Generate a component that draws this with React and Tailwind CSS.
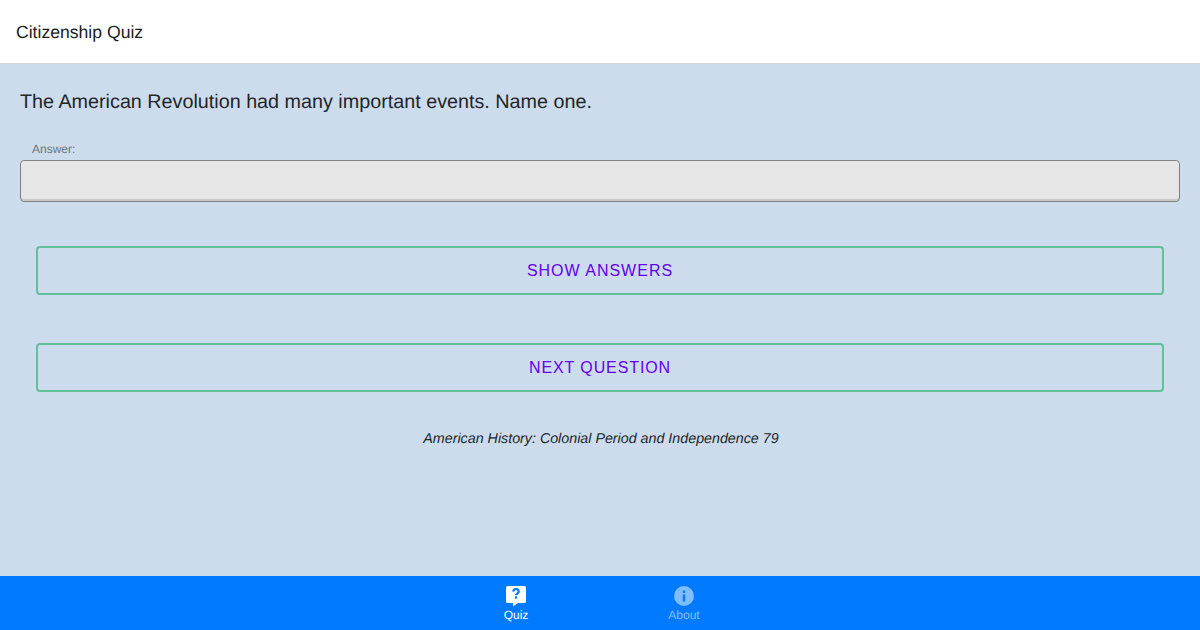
import React from 'react';

function QuizIcon() {
  return (
    <svg width="22" height="22" viewBox="0 0 22 22">
      <path d="M2.500 1h17a1.500 1.500 0 0 1 1.500 1.500v14a1.500 1.500 0 0 1-1.500 1.500h-6.500l-5 3.500v-3.500H2.500a1.500 1.500 0 0 1-1.500-1.500v-14a1.500 1.500 0 0 1 1.500-1.500z" fill="#fff" />
      <path d="M8.300 6.600a2.700 2.700 0 0 1 5.400.2c0 1.700-2.700 1.800-2.700 3.400" fill="none" stroke="#007aff" strokeWidth="2.200" />
      <rect x="9.900" y="11.400" width="2.200" height="2.200" fill="#007aff" />
    </svg>
  );
}

function InfoIcon() {
  return (
    <svg width="20" height="20" viewBox="0 0 20 20">
      <circle cx="10" cy="10" r="10" fill="#fff" />
      <rect x="8.800" y="4.500" width="2.400" height="2.400" fill="#007aff" />
      <rect x="8.800" y="8.500" width="2.400" height="7" fill="#007aff" />
    </svg>
  );
}

function App() {
  return (
    <div className="h-[630px] w-[1200px] flex flex-col bg-[#cddcec] font-['Liberation_Sans',sans-serif] overflow-hidden [text-rendering:geometricPrecision]">
      {/* Header */}
      <div className="h-16 shrink-0 bg-white border-b border-[#d8d8d8] flex items-center pl-4 pt-[2px] text-[17.6px] text-[#1c1c1e]">
        Citizenship Quiz
      </div>

      {/* Question */}
      <div className="flex-1 flex flex-col">
        <div className="pl-5 pt-[26px] text-[19.76px] leading-[24px] text-[#212529]">
          The American Revolution had many important events. Name one.
        </div>

        <div className="pl-8 pt-[28px] text-[12px] leading-[14px] text-[#6c757d]">Answer:</div>
        <div className="mx-5 mt-[4px] h-[42px] rounded-[4px] border border-[#808080] bg-[#e6e6e6] shadow-[inset_0_-2px_0_#c8c8c8]"></div>

        {/* Buttons */}
        <div className="px-9 pt-[44px] flex flex-col gap-[48px]">
          <button className="h-[49px] rounded-[4px] border-2 border-[#61c29a] text-[16px] tracking-[1px] text-[#6200ee]">
            SHOW ANSWERS
          </button>
          <button className="h-[49px] rounded-[4px] border-2 border-[#61c29a] text-[16px] tracking-[0.9px] text-[#6200ee]">
            NEXT QUESTION
          </button>
        </div>

        <div className="pt-[38px] pl-[2px] text-center text-[14.28px] leading-[18px] italic text-[#212529]">
          American History: Colonial Period and Independence 79
        </div>
      </div>

      {/* Tab bar */}
      <div className="h-[54px] shrink-0 bg-[#007aff] flex justify-center">
        <div className="w-[168px] flex flex-col items-center pt-[9px] text-white">
          <QuizIcon />
          <span className="text-[12px] leading-[14px] mt-[1px]">Quiz</span>
        </div>
        <div className="w-[168px] flex flex-col items-center pt-[10px] text-white opacity-50">
          <InfoIcon />
          <span className="text-[12px] leading-[14px] mt-[2px]">About</span>
        </div>
      </div>
    </div>
  );
}

export default App;
